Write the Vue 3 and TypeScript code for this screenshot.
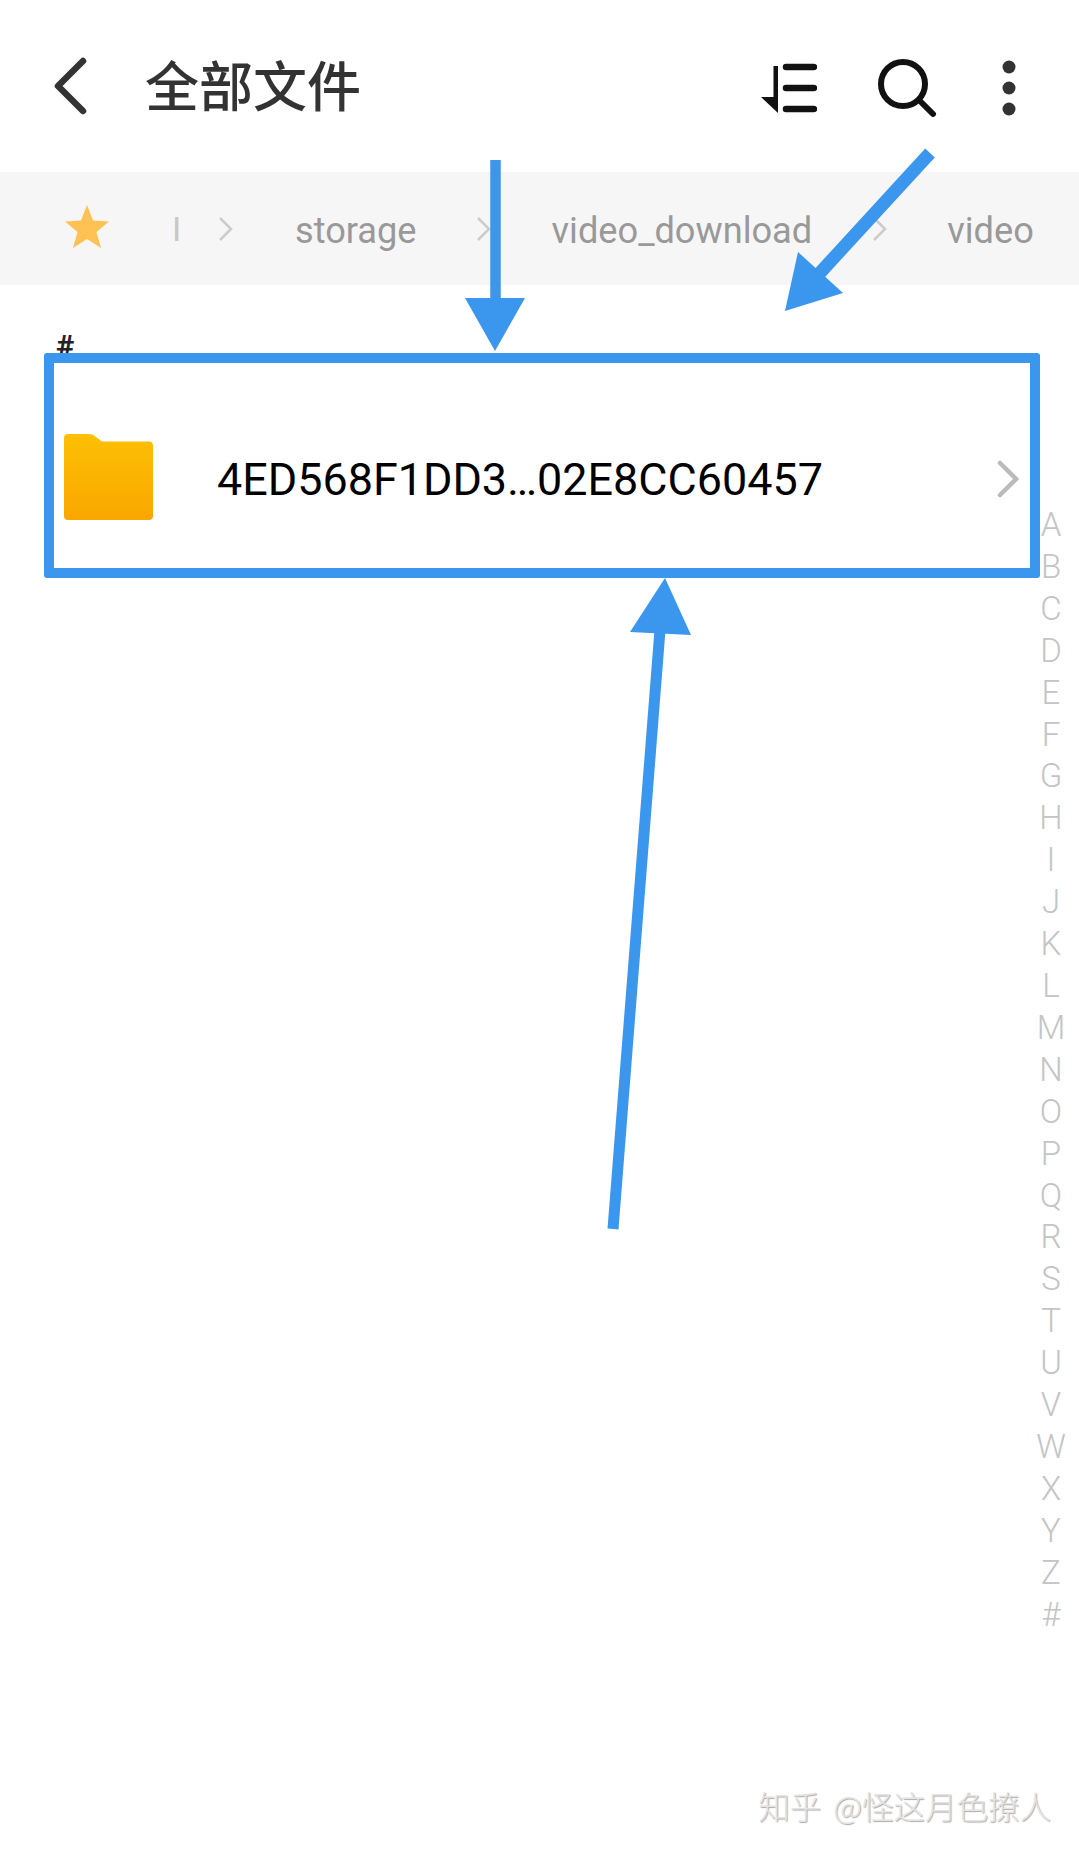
<script setup lang="ts">
const crumbs = [
  { label: 'storage', cls: 'c-storage' },
  { label: 'video_download', cls: 'c-download' },
  { label: 'video', cls: 'c-video' }
];

const letters = 'ABCDEFGHIJKLMNOPQRSTUVWXYZ#'.split('');
</script>

<template>
  <div class="page">
    <header class="topbar">
      <svg class="back" width="36" height="60" viewBox="0 0 36 60">
        <path d="M31 5 6 30l25 25" fill="none" stroke="#333" stroke-width="6.500" stroke-linecap="round" stroke-linejoin="round" />
      </svg>
      <h1 class="title">全部文件</h1>
      <div class="actions">
        <svg width="58" height="54" viewBox="0 0 58 54">
          <path d="M14.500 5h4.500v47L2 36h12.500z" fill="#111" />
          <path d="M27 6h28M27 27h28M27 48h28" stroke="#111" stroke-width="6.500" stroke-linecap="round" />
        </svg>
        <svg class="search" width="60" height="62" viewBox="0 0 60 62">
          <circle cx="26" cy="27" r="22" fill="none" stroke="#111" stroke-width="6" />
          <path d="m42 43 14 14" stroke="#111" stroke-width="6" stroke-linecap="round" />
        </svg>
        <svg width="16" height="58" viewBox="0 0 16 58">
          <circle cx="8" cy="8" r="6.500" fill="#333" />
          <circle cx="8" cy="29" r="6.500" fill="#333" />
          <circle cx="8" cy="50" r="6.500" fill="#333" />
        </svg>
      </div>
    </header>

    <nav class="crumbs">
      <svg class="star" width="44" height="44" viewBox="0 0 44 44">
        <path d="m22 1 6 15.500 16 1-12.500 10.500 4.500 16L22 35l-14 9 4.500-16L0 17.500l16-1z" fill="#fdc253" />
      </svg>
      <span class="root">I</span>
      <svg class="sep first" width="15" height="26" viewBox="0 0 15 26">
        <path d="m2 2 11 11L2 24" fill="none" stroke="#ccc" stroke-width="2.500" />
      </svg>
      <template v-for="(crumb, i) in crumbs" :key="crumb.label">
        <span class="crumb" :class="crumb.cls">{{ crumb.label }}</span>
        <svg v-if="i < crumbs.length - 1" class="sep" width="15" height="26" viewBox="0 0 15 26">
          <path d="m2 2 11 11L2 24" fill="none" stroke="#ccc" stroke-width="2.500" />
        </svg>
      </template>
    </nav>

    <section class="files">
      <div class="group">#</div>
      <div class="row">
        <svg class="folder" width="89" height="86" viewBox="0 0 89 87" preserveAspectRatio="none">
          <defs>
            <linearGradient id="folderFill" x1="0" y1="0" x2="0" y2="1">
              <stop offset="0" stop-color="#fdc003" />
              <stop offset="1" stop-color="#faa700" />
            </linearGradient>
          </defs>
          <path d="M4 0h20c4 0 6 1 8 3l4 3c1 1 2 1.500 4 1.500h45c2.500 0 4 1.500 4 4V83c0 2.500-1.500 4-4 4H4c-2.500 0-4-1.500-4-4V4c0-2.500 1.500-4 4-4z" fill="url(#folderFill)" />
        </svg>
        <span class="name">4ED568F1DD3…02E8CC60457</span>
        <svg class="chevron" width="22" height="38" viewBox="0 0 22 38">
          <path d="m3 3 16 16L3 35" fill="none" stroke="#bbb" stroke-width="4.500" stroke-linecap="round" />
        </svg>
      </div>
    </section>

    <ul class="index">
      <li v-for="letter in letters" :key="letter">{{ letter }}</li>
    </ul>

    <svg class="marks" width="1079" height="1852" viewBox="0 0 1079 1852">
      <path d="M47 353h990a3 3 0 0 1 3 3v219a3 3 0 0 1-3 3H47a3 3 0 0 1-3-3V356a3 3 0 0 1 3-3zM54 363v205h976V363z" fill="#3b96ed" fill-rule="evenodd" />
      <path d="M495.500 160v140" stroke="#3b96ed" stroke-width="10.500" />
      <path d="M465 298h60l-30 53z" fill="#3b96ed" />
      <path d="m930 153-112 122" stroke="#3b96ed" stroke-width="13" />
      <path d="m798 252 45 41-58 18z" fill="#3b96ed" />
      <path d="m660 630-47 599" stroke="#3b96ed" stroke-width="11" />
      <path d="m665 578-35 54 61 3z" fill="#3b96ed" />
    </svg>

    <div class="watermark">知乎 @怪这月色撩人</div>
  </div>
</template>

<style>
html,
body {
  margin: 0;
  background: #fff;
}
</style>

<style scoped>
.page {
  position: relative;
  width: 1079px;
  height: 1852px;
  overflow: hidden;
  background: #fff;
  font-family: Roboto, "Noto Sans CJK SC", sans-serif;
}

.topbar {
  display: flex;
  align-items: center;
  height: 172px;
  padding: 0 62px 0 52px;
  box-sizing: border-box;
}

.back {
  margin-right: 57px;
}

.title {
  margin: 0 0 5px;
  font-family: "Noto Sans CJK SC", sans-serif;
  font-size: 54px;
  font-weight: 500;
  color: #333;
}

.actions {
  display: flex;
  align-items: center;
  gap: 60px;
  margin-left: auto;
  padding-top: 4px;
}

.search {
  margin-right: 4px;
}

.crumbs {
  display: flex;
  align-items: center;
  height: 113px;
  padding-left: 65px;
  background: #f6f6f6;
  white-space: nowrap;
}

.star {
  margin: 0 63px 5px 0;
}

.root {
  width: 9px;
  font-size: 34px;
  color: #c8c8c8;
}

.sep {
  flex: none;
}

.sep.first {
  margin-left: 37px;
}

.crumb {
  padding-top: 4px;
  font-size: 36.200px;
  color: #999;
}

.c-storage {
  margin: 0 59px 0 62px;
}

.c-download {
  margin: 0 60px 0 61px;
}

.c-video {
  margin-left: 60px;
}

.files {
  padding-top: 45px;
}

.group {
  height: 41px;
  padding-left: 56px;
  font-size: 31px;
  font-weight: 700;
  line-height: 34px;
  color: #222;
}

.row {
  display: flex;
  align-items: center;
  height: 215px;
  padding: 0 60px 0 64px;
}

.folder {
  margin-bottom: 3px;
}

.name {
  margin-left: 64px;
  padding-top: 2px;
  font-size: 44.900px;
  color: #000;
}

.chevron {
  margin-left: auto;
}

.index {
  position: absolute;
  top: 504px;
  right: -2px;
  width: 60px;
  margin: 0;
  padding: 0;
  list-style: none;
  font-size: 33px;
  font-weight: 300;
  line-height: 41.9px;
  text-align: center;
  color: #c4c4c4;
}

.marks {
  position: absolute;
  top: 0;
  left: 0;
  pointer-events: none;
}

.watermark {
  position: absolute;
  top: 1783px;
  right: 28px;
  font-family: "Noto Sans CJK SC", sans-serif;
  font-size: 31.500px;
  font-weight: 300;
  line-height: 44px;
  word-spacing: 5px;
  white-space: nowrap;
  color: #e4e4e4;
  text-shadow: 1px 1px 1px #aaa;
}
</style>
